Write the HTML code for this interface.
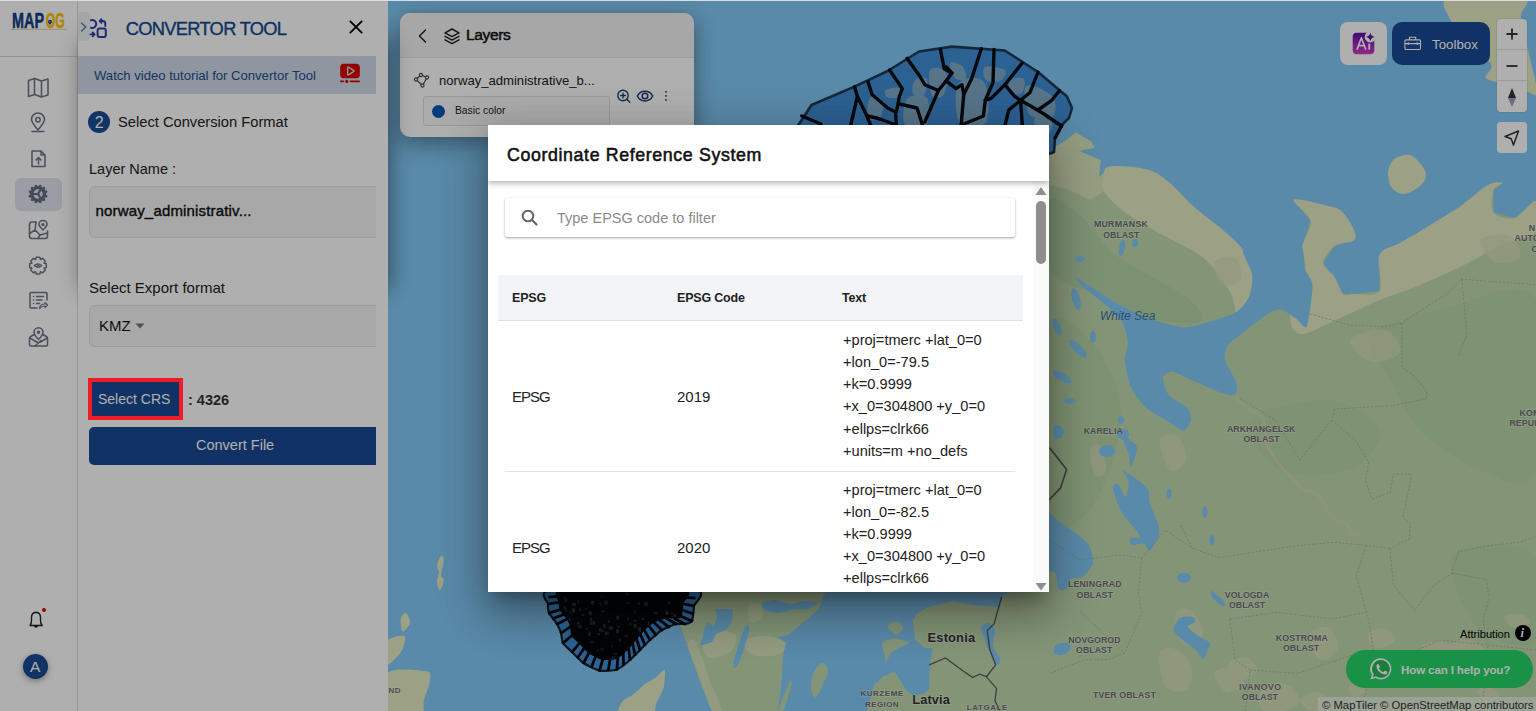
<!DOCTYPE html>
<html><head><meta charset="utf-8">
<style>
*{box-sizing:border-box;margin:0;padding:0}
html,body{width:1536px;height:711px;overflow:hidden;font-family:"Liberation Sans",sans-serif;background:#fff;position:relative}
.abs{position:absolute}
#topline{left:0;top:0;width:1536px;height:1px;background:#d9dde2;z-index:300}
#sidebar{left:0;top:0;width:78px;height:711px;background:#fff;border-right:1px solid #dcdcdc}
#sidebar .hr{position:absolute;left:0;top:56px;width:77px;height:1px;background:#d8d8d8}
#panel{left:78px;top:0;width:310px;height:711px;background:#fff}
#map{left:388px;top:0;width:1148px;height:711px;overflow:hidden}
#overlay{left:0;top:0;width:1536px;height:711px;background:rgba(0,0,0,0.315);z-index:100}
#modal{left:488px;top:125px;width:561px;height:467px;background:#fff;box-shadow:0 11px 15px -7px rgba(0,0,0,.3),0 24px 38px 3px rgba(0,0,0,.22),0 9px 46px 8px rgba(0,0,0,.16);overflow:hidden;z-index:200}
.t{position:absolute;white-space:nowrap;line-height:1}
</style></head><body>
<div id="topline" class="abs"></div>
<div id="map" class="abs"><svg class="abs" style="left:0;top:0" width="1148" height="711" viewBox="388 0 1148 711"><rect x="388" y="0" width="1148" height="711" fill="#84caf7"/>
<path d="M1450.0 -2.0 C1462.3 -5.2 1511.2 -5.2 1523.0 -2.0 C1534.8 1.2 1520.2 8.3 1521.0 17.0 C1521.8 25.7 1525.5 38.8 1528.0 50.0 C1530.5 61.2 1534.7 76.5 1536.0 84.0 C1537.3 91.5 1537.3 93.7 1536.0 95.0 C1534.7 96.3 1533.2 93.8 1528.0 92.0 C1522.8 90.2 1512.0 86.3 1505.0 84.0 C1498.0 81.7 1488.3 81.3 1486.0 78.0 C1483.7 74.7 1494.0 70.3 1491.0 64.0 C1488.0 57.7 1475.0 47.8 1468.0 40.0 C1461.0 32.2 1452.0 24.0 1449.0 17.0 C1446.0 10.0 1437.7 1.2 1450.0 -2.0 Z" fill="#e4e9c2" />
<path d="M1398.0 157.0 C1401.2 155.7 1406.3 154.0 1410.0 155.0 C1413.7 156.0 1417.3 159.7 1420.0 163.0 C1422.7 166.3 1426.0 171.2 1426.0 175.0 C1426.0 178.8 1423.7 182.8 1420.0 186.0 C1416.3 189.2 1408.7 193.7 1404.0 194.0 C1399.3 194.3 1394.7 191.2 1392.0 188.0 C1389.3 184.8 1388.2 179.2 1388.0 175.0 C1387.8 170.8 1389.3 166.0 1391.0 163.0 C1392.7 160.0 1394.8 158.3 1398.0 157.0 Z" fill="#e4e9c2" />
<path d="M1049.0 154.0 L1051.0 154.0 L1063.6 141.7 L1076.0 132.4 L1091.4 141.7 L1094.5 147.8 L1079.0 151.0 L1100.7 160.0 L1099.0 177.2 L1110.0 166.4 L1147.0 169.5 L1168.8 181.9 L1193.5 206.6 L1224.5 231.4 L1243.0 250.0 L1252.3 274.7 L1302.0 247.7 L1310.6 221.0 L1293.7 200.0 L1326.0 205.5 L1343.0 212.6 L1355.6 238.0 L1334.5 246.0 L1323.0 263.0 L1334.5 277.0 L1343.0 294.0 L1354.0 294.0 L1379.5 291.0 L1379.5 255.0 L1399.0 243.5 L1419.0 232.0 L1458.0 208.0 L1467.0 201.0 L1489.0 184.4 L1503.0 183.0 L1493.5 190.0 L1493.5 212.6 L1514.6 218.0 L1536.0 201.0 L1540.0 201.0 L1540.0 715.0 L1049.0 715.0 Z" fill="#c0daae" />
<path d="M1110.0 166.4 C1117.2 165.4 1137.2 166.9 1147.0 169.5 C1156.8 172.1 1161.0 175.7 1168.8 181.9 C1176.5 188.1 1184.2 198.3 1193.5 206.6 C1202.8 214.8 1216.2 224.2 1224.5 231.4 C1232.8 238.6 1238.4 242.8 1243.0 250.0 C1247.6 257.2 1251.3 267.0 1252.3 274.7 C1253.3 282.4 1251.6 289.5 1249.2 296.4 C1246.8 303.3 1241.2 316.7 1238.0 316.0 C1234.8 315.3 1235.3 301.3 1230.0 292.0 C1224.7 282.7 1214.3 268.0 1206.0 260.0 C1197.7 252.0 1189.3 249.3 1180.0 244.0 C1170.7 238.7 1159.7 233.7 1150.0 228.0 C1140.3 222.3 1129.7 216.2 1122.0 210.0 C1114.3 203.8 1107.0 196.7 1104.0 191.0 C1101.0 185.3 1102.8 179.8 1103.8 175.7 C1104.8 171.6 1102.8 167.4 1110.0 166.4 Z" fill="#e4e9c2" />
<path d="M1049.0 150.0 L1063.6 141.7 L1076.0 132.4 L1091.4 141.7 L1094.5 147.8 L1079.0 151.0 L1100.7 160.0 L1099.0 177.2 L1110.0 166.4 L1104.0 191.0 L1090.0 200.0 L1070.0 190.0 L1049.0 185.0 Z" fill="#e4e9c2" opacity="0.75"/>
<path d="M1293.7 200.0 C1296.3 197.4 1317.8 203.4 1326.0 205.5 C1334.2 207.6 1338.1 207.2 1343.0 212.6 C1347.9 218.0 1357.0 232.4 1355.6 238.0 C1354.2 243.6 1339.9 241.8 1334.5 246.0 C1329.1 250.2 1323.0 257.8 1323.0 263.0 C1323.0 268.2 1331.2 271.8 1334.5 277.0 C1337.8 282.2 1339.8 291.2 1343.0 294.0 C1346.2 296.8 1347.9 294.5 1354.0 294.0 C1360.1 293.5 1375.2 297.5 1379.5 291.0 C1383.8 284.5 1376.2 262.9 1379.5 255.0 C1382.8 247.1 1392.4 247.3 1399.0 243.5 C1405.6 239.7 1409.2 237.9 1419.0 232.0 C1428.8 226.1 1450.0 213.2 1458.0 208.0 C1466.0 202.8 1461.8 204.9 1467.0 201.0 C1472.2 197.1 1483.0 187.4 1489.0 184.4 C1495.0 181.4 1502.2 182.1 1503.0 183.0 C1503.8 183.9 1495.1 185.1 1493.5 190.0 C1491.9 194.9 1490.0 207.9 1493.5 212.6 C1497.0 217.3 1507.5 219.9 1514.6 218.0 C1521.7 216.1 1532.4 198.7 1536.0 201.0 C1539.6 203.3 1542.0 224.7 1536.0 232.0 C1530.0 239.3 1511.0 240.0 1500.0 245.0 C1489.0 250.0 1483.3 255.3 1470.0 262.0 C1456.7 268.7 1435.0 278.7 1420.0 285.0 C1405.0 291.3 1393.3 294.5 1380.0 300.0 C1366.7 305.5 1353.3 312.3 1340.0 318.0 C1326.7 323.7 1308.3 335.3 1300.0 334.0 C1291.7 332.7 1289.2 320.7 1290.0 310.0 C1290.8 299.3 1303.0 280.4 1305.0 270.0 C1307.0 259.6 1301.1 255.9 1302.0 247.7 C1302.9 239.5 1312.0 228.9 1310.6 221.0 C1309.2 213.1 1291.1 202.6 1293.7 200.0 Z" fill="#e4e9c2" />
<path d="M1049.0 200.0 C1054.2 192.5 1069.8 206.7 1080.0 215.0 C1090.2 223.3 1100.0 240.8 1110.0 250.0 C1120.0 259.2 1126.7 261.7 1140.0 270.0 C1153.3 278.3 1180.0 291.3 1190.0 300.0 C1200.0 308.7 1206.7 319.0 1200.0 322.0 C1193.3 325.0 1166.7 322.5 1150.0 318.0 C1133.3 313.5 1115.0 301.3 1100.0 295.0 C1085.0 288.7 1068.5 285.8 1060.0 280.0 C1051.5 274.2 1050.8 273.3 1049.0 260.0 C1047.2 246.7 1043.8 207.5 1049.0 200.0 Z" fill="#b0d2a2" opacity="0.7"/>
<path d="M1049.0 330.0 C1055.8 301.7 1078.2 328.3 1090.0 340.0 C1101.8 351.7 1116.7 378.3 1120.0 400.0 C1123.3 421.7 1116.7 450.0 1110.0 470.0 C1103.3 490.0 1090.2 513.3 1080.0 520.0 C1069.8 526.7 1054.2 541.7 1049.0 510.0 C1043.8 478.3 1042.2 358.3 1049.0 330.0 Z" fill="#b0d2a2" opacity="0.55"/>
<path d="M1370.0 335.0 C1378.3 323.3 1412.3 315.8 1440.0 310.0 C1467.7 304.2 1520.0 273.3 1536.0 300.0 C1552.0 326.7 1545.3 441.7 1536.0 470.0 C1526.7 498.3 1499.3 476.7 1480.0 470.0 C1460.7 463.3 1435.0 445.0 1420.0 430.0 C1405.0 415.0 1398.3 395.8 1390.0 380.0 C1381.7 364.2 1361.7 346.7 1370.0 335.0 Z" fill="#b0d2a2" opacity="0.45"/>
<path d="M1250.0 420.0 C1258.3 408.3 1308.3 398.3 1330.0 400.0 C1351.7 401.7 1376.7 418.3 1380.0 430.0 C1383.3 441.7 1366.7 463.3 1350.0 470.0 C1333.3 476.7 1296.7 478.3 1280.0 470.0 C1263.3 461.7 1241.7 431.7 1250.0 420.0 Z" fill="#b0d2a2" opacity="0.35"/>
<path d="M1450.0 560.0 C1453.3 545.8 1485.7 545.0 1500.0 545.0 C1514.3 545.0 1530.0 544.2 1536.0 560.0 C1542.0 575.8 1545.3 628.3 1536.0 640.0 C1526.7 651.7 1494.3 643.3 1480.0 630.0 C1465.7 616.7 1446.7 574.2 1450.0 560.0 Z" fill="#b0d2a2" opacity="0.4"/>
<path d="M1230.0 662.0 C1232.7 659.0 1243.5 656.7 1248.0 658.0 C1252.5 659.3 1257.7 666.3 1257.0 670.0 C1256.3 673.7 1248.2 679.0 1244.0 680.0 C1239.8 681.0 1234.3 679.0 1232.0 676.0 C1229.7 673.0 1227.3 665.0 1230.0 662.0 Z" fill="#d6dcb8" opacity="0.75"/>
<path d="M1176.0 614.0 C1177.7 609.0 1185.5 607.3 1190.0 610.0 C1194.5 612.7 1202.0 624.0 1203.0 630.0 C1204.0 636.0 1199.8 644.3 1196.0 646.0 C1192.2 647.7 1183.3 645.3 1180.0 640.0 C1176.7 634.7 1174.3 619.0 1176.0 614.0 Z" fill="#d6dcb8" opacity="0.75"/>
<path d="M1311.0 632.0 C1313.8 628.0 1325.5 625.3 1330.0 628.0 C1334.5 630.7 1338.8 642.7 1338.0 648.0 C1337.2 653.3 1329.2 659.3 1325.0 660.0 C1320.8 660.7 1315.3 656.7 1313.0 652.0 C1310.7 647.3 1308.2 636.0 1311.0 632.0 Z" fill="#d6dcb8" opacity="0.75"/>
<path d="M1396.0 653.0 C1397.3 650.7 1405.2 648.8 1408.0 650.0 C1410.8 651.2 1414.3 657.7 1413.0 660.0 C1411.7 662.3 1402.8 665.2 1400.0 664.0 C1397.2 662.8 1394.7 655.3 1396.0 653.0 Z" fill="#d6dcb8" opacity="0.75"/>
<path d="M1160.0 652.0 C1162.2 646.0 1172.7 647.3 1178.0 650.0 C1183.3 652.7 1190.7 661.3 1192.0 668.0 C1193.3 674.7 1190.5 687.0 1186.0 690.0 C1181.5 693.0 1169.3 692.3 1165.0 686.0 C1160.7 679.7 1157.8 658.0 1160.0 652.0 Z" fill="#d6dcb8" opacity="0.75"/>
<path d="M1262.0 690.0 C1265.8 685.5 1278.7 682.3 1285.0 684.0 C1291.3 685.7 1300.0 695.5 1300.0 700.0 C1300.0 704.5 1291.3 709.2 1285.0 711.0 C1278.7 712.8 1265.8 714.5 1262.0 711.0 C1258.2 707.5 1258.2 694.5 1262.0 690.0 Z" fill="#d6dcb8" opacity="0.75"/>
<path d="M1440.0 650.0 C1444.2 644.7 1461.7 638.3 1470.0 640.0 C1478.3 641.7 1490.0 653.3 1490.0 660.0 C1490.0 666.7 1477.5 678.0 1470.0 680.0 C1462.5 682.0 1450.0 677.0 1445.0 672.0 C1440.0 667.0 1435.8 655.3 1440.0 650.0 Z" fill="#d6dcb8" opacity="0.75"/>
<path d="M1214.0 262.0 C1216.3 257.5 1231.7 255.0 1236.0 258.0 C1240.3 261.0 1242.3 275.5 1240.0 280.0 C1237.7 284.5 1226.3 288.0 1222.0 285.0 C1217.7 282.0 1211.7 266.5 1214.0 262.0 Z" fill="#d6dcb8" opacity="0.75"/>
<path d="M1350.0 340.0 C1352.2 334.7 1376.7 328.0 1385.0 330.0 C1393.3 332.0 1402.2 346.7 1400.0 352.0 C1397.8 357.3 1380.3 364.0 1372.0 362.0 C1363.7 360.0 1347.8 345.3 1350.0 340.0 Z" fill="#d6dcb8" opacity="0.75"/>
<path d="M1480.0 240.0 C1482.5 235.7 1503.3 233.0 1510.0 236.0 C1516.7 239.0 1522.5 253.7 1520.0 258.0 C1517.5 262.3 1501.7 265.0 1495.0 262.0 C1488.3 259.0 1477.5 244.3 1480.0 240.0 Z" fill="#d6dcb8" opacity="0.75"/>
<path d="M1090.0 450.0 C1090.8 445.2 1097.3 442.7 1100.0 446.0 C1102.7 449.3 1106.8 465.2 1106.0 470.0 C1105.2 474.8 1097.7 478.3 1095.0 475.0 C1092.3 471.7 1089.2 454.8 1090.0 450.0 Z" fill="#d6dcb8" opacity="0.75"/>
<path d="M1369.0 632.0 C1371.5 629.5 1380.7 627.7 1385.0 629.0 C1389.3 630.3 1395.8 636.8 1395.0 640.0 C1394.2 643.2 1384.2 647.3 1380.0 648.0 C1375.8 648.7 1371.8 646.7 1370.0 644.0 C1368.2 641.3 1366.5 634.5 1369.0 632.0 Z" fill="#d6dcb8" opacity="0.75"/>
<path d="M1423.0 645.0 C1425.5 642.8 1434.8 640.5 1440.0 641.0 C1445.2 641.5 1454.0 645.5 1454.0 648.0 C1454.0 650.5 1444.8 655.0 1440.0 656.0 C1435.2 657.0 1427.8 655.8 1425.0 654.0 C1422.2 652.2 1420.5 647.2 1423.0 645.0 Z" fill="#d6dcb8" opacity="0.75"/>
<path d="M1477.0 690.0 C1477.7 687.5 1486.2 686.0 1490.0 687.0 C1493.8 688.0 1500.7 693.5 1500.0 696.0 C1499.3 698.5 1489.8 703.0 1486.0 702.0 C1482.2 701.0 1476.3 692.5 1477.0 690.0 Z" fill="#d6dcb8" opacity="0.75"/>
<path d="M1350.0 684.0 C1351.7 681.7 1359.3 680.7 1362.0 682.0 C1364.7 683.3 1367.7 689.7 1366.0 692.0 C1364.3 694.3 1354.7 697.3 1352.0 696.0 C1349.3 694.7 1348.3 686.3 1350.0 684.0 Z" fill="#d6dcb8" opacity="0.75"/>
<path d="M1504.0 617.0 C1504.8 614.7 1515.7 613.2 1520.0 614.0 C1524.3 614.8 1530.8 619.7 1530.0 622.0 C1529.2 624.3 1519.3 628.8 1515.0 628.0 C1510.7 627.2 1503.2 619.3 1504.0 617.0 Z" fill="#d6dcb8" opacity="0.75"/>
<path d="M1300.0 700.0 C1301.0 696.8 1313.0 691.2 1318.0 692.0 C1323.0 692.8 1331.0 701.8 1330.0 705.0 C1329.0 708.2 1317.0 711.8 1312.0 711.0 C1307.0 710.2 1299.0 703.2 1300.0 700.0 Z" fill="#d6dcb8" opacity="0.75"/>
<path d="M1215.0 672.0 C1216.7 668.0 1231.2 666.0 1236.0 668.0 C1240.8 670.0 1245.7 680.0 1244.0 684.0 C1242.3 688.0 1230.8 694.0 1226.0 692.0 C1221.2 690.0 1213.3 676.0 1215.0 672.0 Z" fill="#d6dcb8" opacity="0.75"/>
<path d="M1160.0 440.0 C1161.3 434.3 1173.7 432.7 1178.0 436.0 C1182.3 439.3 1187.3 454.3 1186.0 460.0 C1184.7 465.7 1174.3 473.3 1170.0 470.0 C1165.7 466.7 1158.7 445.7 1160.0 440.0 Z" fill="#d6dcb8" opacity="0.75"/>
<path d="M1266.6 446.4 L1282 468 L1303.7 489.7 L1316 492.8 L1325.4 505 L1331.6 517.5 L1347 523.7 L1353 536 L1362.5 533" fill="none" stroke="#d8d6b0" stroke-width="2.2" opacity="0.75" stroke-linejoin="round"/>
<path d="M1237 400 L1250 410 L1263.5 418 L1266.6 446.4" fill="none" stroke="#d8d6b0" stroke-width="2.5" opacity="0.6"/>
<path d="M1243.0 250.0 C1242.1 254.3 1251.6 269.3 1252.3 274.7 C1253.0 280.1 1251.0 292.1 1249.2 296.4 C1247.4 300.7 1241.1 308.9 1236.8 311.8 C1232.5 314.7 1218.1 319.2 1212.0 321.0 C1205.9 322.8 1191.8 327.7 1184.2 327.3 C1176.6 326.9 1155.0 320.9 1147.0 318.0 C1139.0 315.1 1122.5 306.1 1116.0 302.5 C1109.5 298.9 1096.1 289.9 1091.4 287.0 C1086.7 284.1 1076.9 277.7 1076.0 277.8 C1075.1 277.9 1080.1 284.6 1083.4 287.6 C1086.7 290.6 1099.5 299.8 1104.0 303.8 C1108.5 307.8 1119.0 317.1 1121.8 321.6 C1124.6 326.1 1127.4 337.7 1127.7 342.2 C1128.0 346.7 1124.4 354.8 1124.7 360.0 C1125.0 365.2 1128.2 381.0 1130.6 386.5 C1133.0 392.0 1140.9 403.1 1145.4 407.2 C1149.9 411.3 1164.5 419.2 1169.0 422.0 C1173.5 424.8 1181.2 431.2 1183.8 430.8 C1186.4 430.4 1190.9 421.8 1191.2 419.0 C1191.5 416.2 1189.4 410.0 1186.8 407.2 C1184.2 404.4 1171.8 398.8 1169.0 395.4 C1166.2 392.0 1162.7 380.5 1163.0 377.7 C1163.3 374.9 1168.5 371.5 1172.0 371.8 C1175.5 372.1 1187.5 378.4 1192.7 380.6 C1197.9 382.8 1211.5 389.3 1216.3 391.0 C1221.1 392.7 1231.6 396.3 1234.0 395.4 C1236.4 394.5 1238.0 387.7 1237.0 383.6 C1236.0 379.5 1226.0 364.5 1225.0 360.0 C1224.0 355.5 1225.6 348.7 1228.0 345.2 C1230.4 341.7 1241.0 334.2 1245.8 330.4 C1250.6 326.6 1265.4 315.1 1269.5 312.7 C1273.6 310.3 1278.2 309.0 1281.3 309.7 C1284.4 310.4 1293.1 316.5 1296.0 318.6 C1298.9 320.7 1304.7 329.2 1306.4 327.5 C1308.1 325.8 1310.1 309.0 1310.8 303.8 C1311.5 298.6 1313.0 287.1 1312.3 283.0 C1311.6 278.9 1306.1 272.5 1304.9 268.4 C1303.7 264.3 1304.3 251.6 1302.0 247.7 C1299.7 243.8 1289.9 236.1 1285.0 235.0 C1280.1 233.9 1264.9 236.2 1260.0 238.0 C1255.1 239.8 1243.9 245.7 1243.0 250.0 Z" fill="#84caf7" />
<path d="M1046.0 516.0 C1048.0 508.5 1054.6 519.0 1058.3 521.0 C1062.0 523.0 1063.3 524.5 1068.0 528.0 C1072.7 531.5 1082.2 536.8 1086.4 542.0 C1090.6 547.2 1092.7 554.8 1093.4 559.0 C1094.1 563.2 1092.5 564.5 1090.6 567.5 C1088.7 570.5 1085.3 575.4 1082.0 577.3 C1078.7 579.2 1073.5 576.8 1071.0 578.7 C1068.5 580.6 1068.8 587.0 1066.7 588.6 C1064.6 590.2 1060.2 591.2 1058.3 588.6 C1056.4 586.0 1057.5 576.8 1055.5 573.0 C1053.5 569.2 1047.6 575.5 1046.0 566.0 C1044.4 556.5 1044.0 523.5 1046.0 516.0 Z" fill="#84caf7" />
<path d="M1124.0 471.0 C1127.1 472.0 1142.7 482.6 1147.0 488.0 C1151.3 493.4 1147.9 496.3 1150.0 503.5 C1152.1 510.7 1159.4 523.6 1159.4 531.4 C1159.4 539.1 1152.6 548.0 1150.0 550.0 C1147.4 552.0 1147.0 544.5 1144.0 543.7 C1141.0 542.9 1134.3 546.0 1132.0 545.0 C1129.7 544.0 1128.7 539.5 1130.0 538.0 C1131.3 536.5 1141.3 540.2 1140.0 536.0 C1138.7 531.8 1126.5 520.8 1122.0 512.8 C1117.5 504.8 1113.5 492.6 1113.0 488.0 C1112.5 483.4 1116.9 483.5 1119.0 485.0 C1121.1 486.5 1123.8 497.5 1125.4 497.0 C1127.0 496.5 1128.7 486.3 1128.5 482.0 C1128.3 477.7 1120.9 470.0 1124.0 471.0 Z" fill="#84caf7" />
<path d="M1120.0 432.0 C1120.3 430.0 1127.2 437.3 1130.0 440.0 C1132.8 442.7 1136.8 443.7 1137.0 448.0 C1137.2 452.3 1132.5 465.3 1131.0 466.0 C1129.5 466.7 1129.8 457.7 1128.0 452.0 C1126.2 446.3 1119.7 434.0 1120.0 432.0 Z" fill="#84caf7" />
<path d="M1180.0 618.0 C1183.0 616.2 1189.5 616.3 1192.0 617.0 C1194.5 617.7 1195.7 620.3 1195.0 622.0 C1194.3 623.7 1187.2 624.5 1188.0 627.0 C1188.8 629.5 1196.3 634.3 1200.0 637.0 C1203.7 639.7 1208.8 640.5 1210.0 643.0 C1211.2 645.5 1208.2 649.3 1207.0 652.0 C1205.8 654.7 1204.8 659.3 1203.0 659.0 C1201.2 658.7 1199.0 652.8 1196.0 650.0 C1193.0 647.2 1188.5 644.8 1185.0 642.0 C1181.5 639.2 1176.8 635.3 1175.0 633.0 C1173.2 630.7 1173.2 630.5 1174.0 628.0 C1174.8 625.5 1177.0 619.8 1180.0 618.0 Z" fill="#84caf7" />
<path d="M1056.0 645.0 C1058.3 643.3 1065.7 642.2 1068.0 643.0 C1070.3 643.8 1071.0 648.0 1070.0 650.0 C1069.0 652.0 1064.7 654.5 1062.0 655.0 C1059.3 655.5 1055.0 654.7 1054.0 653.0 C1053.0 651.3 1053.7 646.7 1056.0 645.0 Z" fill="#84caf7" />
<path d="M1211.0 591.0 C1211.7 590.5 1213.7 592.0 1216.0 594.0 C1218.3 596.0 1224.0 601.0 1225.0 603.0 C1226.0 605.0 1224.2 607.0 1222.0 606.0 C1219.8 605.0 1213.8 599.5 1212.0 597.0 C1210.2 594.5 1210.3 591.5 1211.0 591.0 Z" fill="#84caf7" />
<ellipse cx="1107" cy="451" rx="8" ry="6" transform="rotate(0 1107 451)" fill="#84caf7"/>
<ellipse cx="1184" cy="578" rx="7" ry="5" transform="rotate(0 1184 578)" fill="#84caf7"/>
<ellipse cx="1169" cy="494" rx="2.5" ry="5" transform="rotate(0 1169 494)" fill="#84caf7"/>
<ellipse cx="1205" cy="512" rx="2.5" ry="6" transform="rotate(0 1205 512)" fill="#84caf7"/>
<ellipse cx="1212" cy="540" rx="2.5" ry="5" transform="rotate(0 1212 540)" fill="#84caf7"/>
<ellipse cx="1121" cy="420" rx="3" ry="4" transform="rotate(0 1121 420)" fill="#84caf7"/>
<ellipse cx="1057" cy="327" rx="3.5" ry="9" transform="rotate(-20 1057 327)" fill="#84caf7"/>
<ellipse cx="1078" cy="349" rx="4" ry="12" transform="rotate(-45 1078 349)" fill="#84caf7"/>
<ellipse cx="1093" cy="337" rx="3" ry="6" transform="rotate(0 1093 337)" fill="#84caf7"/>
<ellipse cx="1062" cy="377" rx="4" ry="11" transform="rotate(-60 1062 377)" fill="#84caf7"/>
<ellipse cx="1070" cy="401" rx="6" ry="3" transform="rotate(0 1070 401)" fill="#84caf7"/>
<ellipse cx="1057" cy="432" rx="4" ry="7" transform="rotate(0 1057 432)" fill="#84caf7"/>
<ellipse cx="1123" cy="434" rx="6" ry="5" transform="rotate(0 1123 434)" fill="#84caf7"/>
<ellipse cx="1080" cy="259" rx="5" ry="3" transform="rotate(0 1080 259)" fill="#84caf7"/>
<ellipse cx="1122" cy="248" rx="3" ry="8" transform="rotate(10 1122 248)" fill="#84caf7"/>
<ellipse cx="1135" cy="243" rx="3" ry="4" transform="rotate(0 1135 243)" fill="#84caf7"/>
<ellipse cx="1076" cy="299" rx="4" ry="11" transform="rotate(-15 1076 299)" fill="#84caf7"/>
<ellipse cx="1060" cy="432" rx="4" ry="6" transform="rotate(0 1060 432)" fill="#84caf7"/>
<path d="M1049.6 447.8 L1066.6 469.5 L1060.5 488 L1049 500" fill="none" stroke="#555" stroke-width="1.5"/>
<path d="M1310.6 314 L1349 325 L1384.5 326.7 L1402 323 L1447.7 293 L1461.8 279 L1483 281 L1536 284.5" fill="none" stroke="#9aa191" stroke-width="0.8" stroke-dasharray="2.2 1.6" opacity="0.8"/>
<path d="M1402 323 L1402 367 L1416 377.6 L1426.6 391.7 L1426.6 398.7 L1391.5 405.7 L1335 409 L1331.7 419.8 L1356 441 L1368.7 461.9 L1365.6 480.4 L1371.8 499 L1390 492.8 L1393.4 474 L1412 474 L1402.7 517.5 L1410.4 523.7 L1409 539.2 L1390 548.5 L1365.6 545.4 L1334.7 542.3 L1300.6 545.4 L1257.3 551.6 L1220 557.7 L1192.4 548.5 L1180 523.7" fill="none" stroke="#9aa191" stroke-width="0.8" stroke-dasharray="2.2 1.6" opacity="0.8"/>
<path d="M1461.8 279 L1467 335.4 L1458 356.5" fill="none" stroke="#9aa191" stroke-width="0.8" stroke-dasharray="2.2 1.6" opacity="0.8"/>
<path d="M1365.6 545.4 L1356.3 576.3 L1362.5 598 L1368.7 620 L1375 660 L1360 711" fill="none" stroke="#9aa191" stroke-width="0.8" stroke-dasharray="2.2 1.6" opacity="0.8"/>
<path d="M1390 548.5 L1393.4 585.6 L1415 610.3 L1433.6 585.6 L1452 573.2 L1458.4 551.6 L1489.3 545.4 L1520.2 542.3 L1536 536" fill="none" stroke="#9aa191" stroke-width="0.8" stroke-dasharray="2.2 1.6" opacity="0.8"/>
<path d="M1452 573.2 L1486 579.4 L1489.3 598 L1483 620 L1490 660 L1480 711" fill="none" stroke="#9aa191" stroke-width="0.8" stroke-dasharray="2.2 1.6" opacity="0.8"/>
<path d="M1141.7 558 L1138.3 592 L1141.7 612.4 L1124.7 653 L1107.8 659.8 L1084 659.8 L1050 673.4" fill="none" stroke="#9aa191" stroke-width="0.8" stroke-dasharray="2.2 1.6" opacity="0.8"/>
<path d="M1229.8 619 L1277.3 612.4 L1331.5 619 L1365.4 612.4" fill="none" stroke="#9aa191" stroke-width="0.8" stroke-dasharray="2.2 1.6" opacity="0.8"/>
<path d="M1250 670 L1297.6 673.4 L1358.6 653 L1396 659.8 L1440 640 L1536 650" fill="none" stroke="#9aa191" stroke-width="0.8" stroke-dasharray="2.2 1.6" opacity="0.8"/>
<path d="M1229.8 619 L1235 660 L1250 670 L1245 711" fill="none" stroke="#9aa191" stroke-width="0.8" stroke-dasharray="2.2 1.6" opacity="0.8"/>
<path d="M1080 611 L1100 630 L1124.7 653" fill="none" stroke="#9aa191" stroke-width="0.8" stroke-dasharray="2.2 1.6" opacity="0.8"/>
<path d="M1049 540 L1080 560 L1120 555 L1141.7 558 L1165 530 L1192.4 548.5" fill="none" stroke="#9aa191" stroke-width="0.8" stroke-dasharray="2.2 1.6" opacity="0.8"/>
<path d="M1240 398 L1275 420 L1300 460 L1331.7 419.8" fill="none" stroke="#9aa191" stroke-width="0.8" stroke-dasharray="2.2 1.6" opacity="0.8"/>
<path d="M437.0 566.0 C437.3 563.3 439.8 557.0 441.0 556.0 C442.2 555.0 444.0 556.8 444.0 560.0 C444.0 563.2 441.0 571.7 441.0 575.0 C441.0 578.3 444.2 577.5 444.0 580.0 C443.8 582.5 441.2 589.7 440.0 590.0 C438.8 590.3 437.2 585.0 437.0 582.0 C436.8 579.0 439.0 574.7 439.0 572.0 C439.0 569.3 436.7 568.7 437.0 566.0 Z" fill="#e4e9c2" />
<path d="M401.0 618.0 C401.7 615.0 404.5 612.3 406.0 613.0 C407.5 613.7 409.8 619.5 410.0 622.0 C410.2 624.5 408.3 626.5 407.0 628.0 C405.7 629.5 403.0 632.7 402.0 631.0 C401.0 629.3 400.3 621.0 401.0 618.0 Z" fill="#e4e9c2" />
<path d="M386.0 642.0 C389.0 637.3 401.2 635.0 404.0 636.0 C406.8 637.0 404.3 644.3 403.0 648.0 C401.7 651.7 398.8 655.3 396.0 658.0 C393.2 660.7 387.7 666.7 386.0 664.0 C384.3 661.3 383.0 646.7 386.0 642.0 Z" fill="#e4e9c2" />
<path d="M386.0 674.0 C392.5 666.7 417.7 670.0 425.0 671.0 C432.3 672.0 430.2 675.2 430.0 680.0 C429.8 684.8 425.7 694.2 424.0 700.0 C422.3 705.8 426.3 712.5 420.0 715.0 C413.7 717.5 391.7 721.8 386.0 715.0 C380.3 708.2 379.5 681.3 386.0 674.0 Z" fill="#e4e9c2" />
<path d="M664.6 670.0 C665.6 670.9 664.5 683.0 664.0 686.0 C663.5 689.0 660.9 693.9 660.0 696.0 C659.1 698.1 656.9 701.8 656.0 704.0 C655.1 706.2 656.3 713.7 652.0 715.0 C647.7 716.3 622.5 716.5 619.0 715.0 C615.5 713.5 620.2 704.5 622.0 702.0 C623.8 699.5 631.3 696.1 634.0 694.0 C636.7 691.9 642.5 685.9 645.0 684.0 C647.5 682.1 652.7 679.6 655.0 678.0 C657.3 676.4 663.6 669.1 664.6 670.0 Z" fill="#e4e9c2" />
<path d="M690.0 590.0 L826.0 590.0 L818.5 609.7 L803.7 622.0 L789.0 634.4 L776.0 638.0 L786.0 642.0 L783.0 655.0 L782.0 675.0 L780.0 697.0 L777.0 715.0 L714.0 715.0 L703.0 690.0 L694.0 665.0 L687.0 645.0 L682.0 630.0 L679.0 623.0 Z" fill="#c0daae" />
<path d="M688.0 645.0 C688.2 649.2 692.3 657.5 695.0 665.0 C697.7 672.5 701.2 682.3 704.0 690.0 C706.8 697.7 709.0 707.5 712.0 711.0 C715.0 714.5 722.0 715.2 722.0 711.0 C722.0 706.8 715.2 694.5 712.0 686.0 C708.8 677.5 706.0 667.7 703.0 660.0 C700.0 652.3 696.5 642.5 694.0 640.0 C691.5 637.5 687.8 640.8 688.0 645.0 Z" fill="#e4e9c2" opacity="0.55"/>
<path d="M702.0 634.0 C704.5 630.7 712.3 629.7 718.0 630.0 C723.7 630.3 734.0 632.3 736.0 636.0 C738.0 639.7 734.0 648.3 730.0 652.0 C726.0 655.7 716.5 658.3 712.0 658.0 C707.5 657.7 704.7 654.0 703.0 650.0 C701.3 646.0 699.5 637.3 702.0 634.0 Z" fill="#e4e9c2" opacity="0.6"/>
<path d="M746.0 640.0 C749.0 637.3 759.5 635.7 766.0 636.0 C772.5 636.3 782.7 639.0 785.0 642.0 C787.3 645.0 784.2 651.7 780.0 654.0 C775.8 656.3 765.3 656.3 760.0 656.0 C754.7 655.7 750.3 654.7 748.0 652.0 C745.7 649.3 743.0 642.7 746.0 640.0 Z" fill="#e4e9c2" opacity="0.6"/>
<path d="M749.0 606.0 C750.7 603.0 757.8 602.0 760.0 604.0 C762.2 606.0 763.7 615.0 762.0 618.0 C760.3 621.0 752.2 624.0 750.0 622.0 C747.8 620.0 747.3 609.0 749.0 606.0 Z" fill="#e4e9c2" opacity="0.55"/>
<path d="M715.0 609.0 L733.0 609.0 L732.0 622.0 L726.0 630.0 L716.0 634.0 L712.0 642.0 L700.0 646.0 L704.0 630.0 L708.0 622.0 L714.0 626.0 L717.0 618.0 Z" fill="#84caf7" />
<path d="M745.0 627.0 C747.5 622.2 749.8 625.5 749.0 631.0 C748.2 636.5 742.3 653.8 740.0 660.0 C737.7 666.2 736.0 668.0 735.0 668.0 C734.0 668.0 732.3 666.8 734.0 660.0 C735.7 653.2 742.5 631.8 745.0 627.0 Z" fill="#84caf7" />
<path d="M762.0 603.0 C763.0 602.0 772.2 599.9 775.0 600.0 C777.8 600.1 787.0 603.9 790.0 604.0 C793.0 604.1 802.2 601.1 805.0 601.0 C807.8 600.9 817.7 602.2 818.0 603.0 C818.3 603.8 810.6 608.3 808.0 609.0 C805.4 609.7 795.0 609.6 792.0 610.0 C789.0 610.4 780.7 613.0 778.0 613.0 C775.3 613.0 766.6 611.0 765.0 610.0 C763.4 609.0 761.0 604.0 762.0 603.0 Z" fill="#84caf7" />
<path d="M822.0 663.0 C824.5 662.3 827.8 666.5 828.0 670.0 C828.2 673.5 825.0 679.5 823.0 684.0 C821.0 688.5 818.0 696.2 816.0 697.0 C814.0 697.8 811.5 692.8 811.0 689.0 C810.5 685.2 811.2 678.3 813.0 674.0 C814.8 669.7 819.5 663.7 822.0 663.0 Z" fill="#c0daae" />
<path d="M789.0 683.0 C791.2 678.7 792.0 681.3 791.0 686.0 C790.0 690.7 785.2 706.7 783.0 711.0 C780.8 715.3 777.0 716.7 778.0 712.0 C779.0 707.3 786.8 687.3 789.0 683.0 Z" fill="#c0daae" />
<path d="M913.0 620.6 L916.6 613.8 L928.5 607.0 L952.3 601.0 L976.0 605.3 L1000.0 607.0 L1001.7 596.8 L1010.0 592.0 L1049.0 590.0 L1049.0 715.0 L866.0 715.0 L874.0 685.3 L882.5 676.8 L894.5 671.7 L897.9 676.8 L906.4 690.4 L913.2 695.5 L923.4 693.8 L929.3 688.7 L929.3 678.5 L930.2 663.2 L932.7 647.9 L925.0 647.9 L914.9 639.4 Z" fill="#c0daae" />
<path d="M882.5 642.8 C884.2 640.4 890.8 638.8 894.5 638.5 C898.2 638.2 902.3 640.3 904.7 641.0 C907.1 641.7 909.9 641.6 909.0 642.8 C908.1 643.9 902.6 646.2 899.6 647.9 C896.6 649.6 893.3 650.7 891.0 653.0 C888.7 655.3 887.1 661.5 886.0 661.5 C884.9 661.5 884.8 656.1 884.2 653.0 C883.6 649.9 880.8 645.2 882.5 642.8 Z" fill="#c0daae" />
<path d="M887.6 626.6 C887.6 624.5 893.6 621.4 896.2 621.5 C898.8 621.6 903.0 625.3 903.0 627.4 C903.0 629.5 898.8 634.3 896.2 634.2 C893.6 634.1 887.6 628.7 887.6 626.6 Z" fill="#c0daae" />
<path d="M981.3 627.4 C982.1 624.7 987.5 622.6 989.8 623.2 C992.1 623.8 994.3 627.0 994.9 630.8 C995.5 634.6 992.4 641.7 993.2 646.2 C994.1 650.7 999.4 654.9 1000.0 658.0 C1000.6 661.1 998.3 665.7 996.6 664.9 C994.9 664.1 991.8 657.2 989.8 653.0 C987.8 648.8 986.1 643.7 984.7 639.4 C983.3 635.1 980.4 630.1 981.3 627.4 Z" fill="#84caf7" />
<path d="M1001.7 596.8 L994 624 L987.2 630.8 L989.8 649.6 L995.7 664.9 L986.4 676.8 L996.6 688.7 L994.9 700.6 L1000 711" fill="none" stroke="#5a5a5a" stroke-width="1.3"/>
<path d="M929.3 664.9 L945.5 658 L964.2 671.7 L972.7 677.6 L979.5 674.2 L987.2 676.8" fill="none" stroke="#5a5a5a" stroke-width="1.3"/>
<path d="M797.8 126.0 L811.5 105.0 L854.5 86.6 L887.7 71.0 L919.0 51.5 L952.0 46.6 L1004.8 50.5 L1038.0 72.0 L1067.0 96.4 L1072.0 108.0 L1069.0 118.0 L1063.0 123.8 L1055.0 138.0 L1054.0 152.0 L1049.0 154.0 L797.0 154.0 Z" fill="#408ed6"/>
<path d="M950.0 63.0 C951.2 61.0 959.3 63.3 962.0 66.0 C964.7 68.7 967.2 77.0 966.0 79.0 C964.8 81.0 957.7 80.7 955.0 78.0 C952.3 75.3 948.8 65.0 950.0 63.0 Z" fill="#86adc6" opacity="0.9"/>
<path d="M930.0 70.0 C932.3 66.0 943.7 68.0 946.0 72.0 C948.3 76.0 946.3 90.0 944.0 94.0 C941.7 98.0 934.3 100.0 932.0 96.0 C929.7 92.0 927.7 74.0 930.0 70.0 Z" fill="#86adc6" opacity="0.9"/>
<path d="M915.0 80.0 C917.3 77.5 925.5 76.5 927.0 79.0 C928.5 81.5 926.3 92.5 924.0 95.0 C921.7 97.5 914.5 96.5 913.0 94.0 C911.5 91.5 912.7 82.5 915.0 80.0 Z" fill="#86adc6" opacity="0.9"/>
<path d="M886.0 90.0 C888.0 88.5 896.8 86.8 899.0 88.0 C901.2 89.2 901.0 95.5 899.0 97.0 C897.0 98.5 889.2 98.2 887.0 97.0 C884.8 95.8 884.0 91.5 886.0 90.0 Z" fill="#86adc6" opacity="0.9"/>
<path d="M985.0 67.0 C988.2 65.3 1002.5 67.7 1005.0 70.0 C1007.5 72.3 1003.2 79.3 1000.0 81.0 C996.8 82.7 988.5 82.3 986.0 80.0 C983.5 77.7 981.8 68.7 985.0 67.0 Z" fill="#86adc6" opacity="0.9"/>
<path d="M1011.0 80.0 C1013.3 77.8 1022.2 76.8 1024.0 79.0 C1025.8 81.2 1024.3 90.8 1022.0 93.0 C1019.7 95.2 1011.8 94.2 1010.0 92.0 C1008.2 89.8 1008.7 82.2 1011.0 80.0 Z" fill="#86adc6" opacity="0.9"/>
<path d="M1026.0 86.0 C1029.7 82.8 1047.5 91.0 1052.0 96.0 C1056.5 101.0 1056.7 112.8 1053.0 116.0 C1049.3 119.2 1034.5 120.0 1030.0 115.0 C1025.5 110.0 1022.3 89.2 1026.0 86.0 Z" fill="#86adc6" opacity="0.9"/>
<path d="M958.0 84.0 C962.0 77.0 979.3 75.7 984.0 82.0 C988.7 88.3 990.0 115.0 986.0 122.0 C982.0 129.0 964.7 130.3 960.0 124.0 C955.3 117.7 954.0 91.0 958.0 84.0 Z" fill="#86adc6" opacity="0.9"/>
<path d="M907.0 99.0 C910.7 94.5 923.8 93.7 927.0 98.0 C930.2 102.3 929.7 120.5 926.0 125.0 C922.3 129.5 908.2 129.3 905.0 125.0 C901.8 120.7 903.3 103.5 907.0 99.0 Z" fill="#86adc6" opacity="0.9"/>
<path d="M870.0 98.0 C872.3 95.3 880.3 98.7 882.0 102.0 C883.7 105.3 882.3 115.3 880.0 118.0 C877.7 120.7 869.7 121.3 868.0 118.0 C866.3 114.7 867.7 100.7 870.0 98.0 Z" fill="#86adc6" opacity="0.9"/>
<path d="M1035.0 118.0 C1037.3 115.8 1049.8 119.2 1052.0 122.0 C1054.2 124.8 1050.3 132.8 1048.0 135.0 C1045.7 137.2 1040.2 137.8 1038.0 135.0 C1035.8 132.2 1032.7 120.2 1035.0 118.0 Z" fill="#86adc6" opacity="0.9"/>
<path d="M797.8 126 L811.5 105 L854.5 86.6 L887.7 71 L919 51.5 L952 46.6 L1004.8 50.5 L1038 72 L1067 96.4 L1072 108 L1069 118 L1063 123.75 L1055 138 L1054 152 L1049 154" fill="none" stroke="#1f3a52" stroke-width="2.6" stroke-linejoin="round"/>
<path d="M854.5 86.6 L857.4 96.4 L850.5 126.0" fill="none" stroke="#0a0e12" stroke-width="3.4" stroke-linejoin="round" stroke-linecap="round"/>
<path d="M857.4 96.4 L866.0 114.0 L871.0 126.0" fill="none" stroke="#0a0e12" stroke-width="3.4" stroke-linejoin="round" stroke-linecap="round"/>
<path d="M868.0 81.8 L872.0 94.5 L887.7 108.0 L895.5 112.0 L896.4 126.0" fill="none" stroke="#0a0e12" stroke-width="3.4" stroke-linejoin="round" stroke-linecap="round"/>
<path d="M868.0 116.0 L880.0 119.0 L893.5 124.0" fill="none" stroke="#0a0e12" stroke-width="3.4" stroke-linejoin="round" stroke-linecap="round"/>
<path d="M889.6 70.0 L902.3 88.6 L899.4 96.4 L896.4 112.0" fill="none" stroke="#0a0e12" stroke-width="3.4" stroke-linejoin="round" stroke-linecap="round"/>
<path d="M907.0 58.3 L919.0 75.0 L924.8 84.7 L938.4 90.5 L946.2 80.8 L952.0 73.0 L946.2 67.0" fill="none" stroke="#0a0e12" stroke-width="3.4" stroke-linejoin="round" stroke-linecap="round"/>
<path d="M899.4 104.0 L917.0 108.0 L922.8 126.0" fill="none" stroke="#0a0e12" stroke-width="3.4" stroke-linejoin="round" stroke-linecap="round"/>
<path d="M938.4 90.5 L932.6 104.0 L924.8 122.0" fill="none" stroke="#0a0e12" stroke-width="3.4" stroke-linejoin="round" stroke-linecap="round"/>
<path d="M940.4 49.5 L944.3 69.0 L952.0 73.0" fill="none" stroke="#0a0e12" stroke-width="3.4" stroke-linejoin="round" stroke-linecap="round"/>
<path d="M946.2 80.8 L956.0 88.6 L961.9 84.7 L963.8 94.5 L961.0 126.0" fill="none" stroke="#0a0e12" stroke-width="3.4" stroke-linejoin="round" stroke-linecap="round"/>
<path d="M981.4 48.5 L971.6 78.8 L963.8 94.5" fill="none" stroke="#0a0e12" stroke-width="3.4" stroke-linejoin="round" stroke-linecap="round"/>
<path d="M994.0 49.5 L993.0 82.7 L985.3 100.3 L983.4 116.0 L963.8 124.0" fill="none" stroke="#0a0e12" stroke-width="3.4" stroke-linejoin="round" stroke-linecap="round"/>
<path d="M1022.0 63.2 L1004.8 84.7 L991.2 98.4 L985.3 100.3" fill="none" stroke="#0a0e12" stroke-width="3.4" stroke-linejoin="round" stroke-linecap="round"/>
<path d="M1004.8 84.7 L1014.6 96.4 L1020.5 100.3 L1034.0 108.0 L1044.0 114.0 L1061.5 126.0" fill="none" stroke="#0a0e12" stroke-width="3.4" stroke-linejoin="round" stroke-linecap="round"/>
<path d="M1038.0 72.0 L1030.0 92.5 L1020.5 100.3" fill="none" stroke="#0a0e12" stroke-width="3.4" stroke-linejoin="round" stroke-linecap="round"/>
<path d="M1020.5 100.3 L1008.8 110.0 L1004.8 126.0" fill="none" stroke="#0a0e12" stroke-width="3.4" stroke-linejoin="round" stroke-linecap="round"/>
<path d="M1020.5 100.3 L1022.4 126.0" fill="none" stroke="#0a0e12" stroke-width="3.4" stroke-linejoin="round" stroke-linecap="round"/>
<path d="M1059.5 90.5 L1051.7 100.3 L1038.0 110.0" fill="none" stroke="#0a0e12" stroke-width="3.4" stroke-linejoin="round" stroke-linecap="round"/>
<path d="M801.7 116.0 L821.0 124.0" fill="none" stroke="#0a0e12" stroke-width="3.4" stroke-linejoin="round" stroke-linecap="round"/>
<path d="M1061.5 126.0 L1055.0 138.0" fill="none" stroke="#0a0e12" stroke-width="3.4" stroke-linejoin="round" stroke-linecap="round"/>
<path d="M551.0 590.0 C536.3 591.4 548.2 601.7 548.0 604.0 C547.8 606.3 548.1 611.0 549.0 613.0 C549.9 615.0 555.8 622.0 557.0 624.0 C558.2 626.0 560.4 631.1 561.0 633.0 C561.6 634.9 561.9 641.1 563.0 643.0 C564.1 644.9 570.0 650.0 572.0 652.0 C574.0 654.0 580.8 661.1 583.5 663.0 C586.2 664.9 596.1 670.0 599.5 670.6 C602.9 671.2 614.0 670.6 617.0 669.5 C620.0 668.4 627.7 662.0 630.0 660.0 C632.3 658.0 638.0 652.0 640.0 650.0 C642.0 648.0 647.8 642.0 650.0 640.0 C652.2 638.0 659.4 631.6 662.0 630.0 C664.6 628.4 673.7 624.6 676.0 624.0 C678.3 623.4 683.4 624.3 685.0 624.0 C686.6 623.7 691.1 622.8 692.0 621.0 C692.9 619.2 693.7 609.1 694.0 606.0 C694.3 602.9 709.3 591.6 695.0 590.0 C680.7 588.4 565.7 588.6 551.0 590.0 Z" fill="#4290d8" stroke="#16222e" stroke-width="2.2"/>
<path d="M562.0 590.3 C549.5 591.5 559.1 600.3 558.9 602.2 C558.6 604.2 558.8 608.3 559.6 610.0 C560.4 611.6 565.8 617.5 566.9 619.1 C567.9 620.8 569.7 625.2 570.1 626.9 C570.6 628.5 570.4 634.1 571.3 635.8 C572.2 637.5 577.3 641.8 579.0 643.5 C580.8 645.3 586.4 651.7 588.7 653.3 C591.1 655.0 599.6 659.5 602.5 660.0 C605.4 660.5 615.1 659.6 617.7 658.5 C620.3 657.4 626.8 651.0 628.7 649.1 C630.6 647.2 635.2 641.4 636.7 639.5 C638.3 637.6 642.7 632.2 644.5 630.5 C646.2 628.8 651.8 623.6 654.0 622.4 C656.2 621.2 664.4 618.7 666.5 618.4 C668.7 618.1 673.7 619.2 675.2 619.0 C676.7 618.9 681.0 618.3 681.8 616.8 C682.6 615.3 683.0 606.5 683.2 603.9 C683.4 601.3 696.1 591.7 684.0 590.3 C671.9 588.9 574.5 589.1 562.0 590.3 Z" fill="#05080b"/>
<path d="M548.5 597.1 L561.5 596.2" stroke="#06090c" stroke-width="2.8"/>
<path d="M547.0 604.2 L559.8 602.1" stroke="#06090c" stroke-width="2.8"/>
<path d="M548.0 613.3 L560.5 609.7" stroke="#06090c" stroke-width="2.8"/>
<path d="M552.1 618.9 L564.2 614.2" stroke="#06090c" stroke-width="2.8"/>
<path d="M556.1 624.4 L567.8 618.7" stroke="#06090c" stroke-width="2.8"/>
<path d="M560.2 633.6 L571.0 626.3" stroke="#06090c" stroke-width="2.8"/>
<path d="M562.2 643.7 L572.1 635.2" stroke="#06090c" stroke-width="2.8"/>
<path d="M571.4 652.8 L579.7 642.8" stroke="#06090c" stroke-width="2.8"/>
<path d="M577.2 658.3 L584.5 647.6" stroke="#06090c" stroke-width="2.8"/>
<path d="M583.0 663.9 L589.2 652.5" stroke="#06090c" stroke-width="2.8"/>
<path d="M591.1 667.7 L596.0 655.7" stroke="#06090c" stroke-width="2.8"/>
<path d="M599.2 671.6 L602.8 659.1" stroke="#06090c" stroke-width="2.8"/>
<path d="M608.1 671.0 L610.3 658.2" stroke="#06090c" stroke-width="2.8"/>
<path d="M616.9 670.5 L617.8 657.5" stroke="#06090c" stroke-width="2.8"/>
<path d="M623.5 665.7 L623.3 652.8" stroke="#06090c" stroke-width="2.8"/>
<path d="M630.1 661.0 L628.6 648.1" stroke="#06090c" stroke-width="2.8"/>
<path d="M635.2 656.0 L632.6 643.2" stroke="#06090c" stroke-width="2.8"/>
<path d="M640.3 651.0 L636.4 638.5" stroke="#06090c" stroke-width="2.8"/>
<path d="M645.4 645.9 L640.2 634.0" stroke="#06090c" stroke-width="2.8"/>
<path d="M650.5 640.9 L644.0 629.6" stroke="#06090c" stroke-width="2.8"/>
<path d="M656.6 635.8 L648.6 625.6" stroke="#06090c" stroke-width="2.8"/>
<path d="M662.7 630.7 L653.3 621.7" stroke="#06090c" stroke-width="2.8"/>
<path d="M669.8 627.6 L659.4 619.8" stroke="#06090c" stroke-width="2.8"/>
<path d="M676.9 624.5 L665.7 617.9" stroke="#06090c" stroke-width="2.8"/>
<path d="M685.9 624.5 L674.3 618.6" stroke="#06090c" stroke-width="2.8"/>
<path d="M692.9 621.4 L680.9 616.4" stroke="#06090c" stroke-width="2.8"/>
<path d="M694.0 613.8 L681.5 610.0" stroke="#06090c" stroke-width="2.8"/>
<path d="M695.0 606.2 L682.2 603.7" stroke="#06090c" stroke-width="2.8"/>
<path d="M695.5 598.1 L682.5 597.0" stroke="#06090c" stroke-width="2.8"/>
<rect x="598.7" y="602.6" width="3.1" height="1.7" fill="#5e8296" opacity="0.32"/>
<rect x="627.3" y="617.6" width="1.6" height="2.8" fill="#5e8296" opacity="0.32"/>
<rect x="564.4" y="598.3" width="2.6" height="3.6" fill="#5e8296" opacity="0.32"/>
<rect x="571.7" y="607.6" width="3.1" height="3.9" fill="#5e8296" opacity="0.32"/>
<rect x="632.9" y="619.8" width="3.9" height="1.6" fill="#5e8296" opacity="0.32"/>
<rect x="670.9" y="612.3" width="1.9" height="1.8" fill="#5e8296" opacity="0.32"/>
<rect x="596.6" y="649.1" width="2.0" height="3.0" fill="#5e8296" opacity="0.2"/>
<rect x="641.3" y="618.1" width="2.9" height="1.7" fill="#5e8296" opacity="0.32"/>
<rect x="563.0" y="606.4" width="3.2" height="2.6" fill="#5e8296" opacity="0.32"/>
<rect x="597.4" y="633.0" width="2.6" height="2.2" fill="#5e8296" opacity="0.32"/>
<rect x="588.0" y="632.2" width="2.8" height="3.7" fill="#5e8296" opacity="0.32"/>
<rect x="653.5" y="612.2" width="4.0" height="1.8" fill="#5e8296" opacity="0.32"/>
<rect x="611.4" y="645.0" width="1.9" height="2.7" fill="#5e8296" opacity="0.2"/>
<rect x="673.2" y="614.0" width="3.2" height="3.0" fill="#5e8296" opacity="0.32"/>
<rect x="633.3" y="623.9" width="3.6" height="3.9" fill="#5e8296" opacity="0.32"/>
<rect x="619.0" y="638.5" width="1.7" height="3.3" fill="#5e8296" opacity="0.32"/>
<rect x="666.0" y="611.9" width="2.5" height="3.2" fill="#5e8296" opacity="0.32"/>
<rect x="577.7" y="600.2" width="1.6" height="3.4" fill="#5e8296" opacity="0.32"/>
<rect x="572.5" y="609.3" width="2.5" height="3.7" fill="#5e8296" opacity="0.32"/>
<rect x="592.6" y="621.1" width="2.4" height="3.7" fill="#5e8296" opacity="0.32"/>
<rect x="578.8" y="608.2" width="2.1" height="2.7" fill="#5e8296" opacity="0.32"/>
<rect x="634.5" y="610.4" width="1.5" height="2.5" fill="#5e8296" opacity="0.32"/>
<rect x="604.8" y="631.6" width="3.9" height="3.2" fill="#5e8296" opacity="0.32"/>
<rect x="624.6" y="635.2" width="3.2" height="1.6" fill="#5e8296" opacity="0.32"/>
<rect x="608.0" y="619.9" width="1.8" height="3.1" fill="#5e8296" opacity="0.32"/>
<rect x="563.4" y="596.7" width="2.0" height="1.9" fill="#5e8296" opacity="0.32"/>
<rect x="600.9" y="595.7" width="1.5" height="1.9" fill="#5e8296" opacity="0.32"/>
<rect x="568.7" y="617.5" width="1.6" height="3.7" fill="#5e8296" opacity="0.32"/>
<rect x="637.9" y="602.4" width="2.1" height="2.4" fill="#5e8296" opacity="0.32"/>
<rect x="604.2" y="600.6" width="3.6" height="4.0" fill="#5e8296" opacity="0.32"/>
<rect x="617.9" y="625.9" width="1.7" height="1.8" fill="#5e8296" opacity="0.32"/>
<rect x="601.3" y="610.5" width="3.6" height="1.9" fill="#5e8296" opacity="0.32"/>
<rect x="626.3" y="602.3" width="2.9" height="1.6" fill="#5e8296" opacity="0.32"/>
<rect x="590.3" y="617.7" width="1.9" height="3.4" fill="#5e8296" opacity="0.32"/>
<rect x="626.9" y="646.5" width="2.3" height="2.1" fill="#5e8296" opacity="0.2"/>
<rect x="585.6" y="628.2" width="2.4" height="1.6" fill="#5e8296" opacity="0.32"/>
<rect x="590.0" y="640.5" width="3.9" height="2.6" fill="#5e8296" opacity="0.2"/>
<rect x="584.8" y="607.9" width="2.0" height="2.0" fill="#5e8296" opacity="0.32"/>
<rect x="599.9" y="648.1" width="3.9" height="2.5" fill="#5e8296" opacity="0.2"/>
<rect x="609.2" y="658.3" width="3.3" height="1.9" fill="#5e8296" opacity="0.2"/>
<rect x="572.2" y="602.6" width="3.8" height="3.5" fill="#5e8296" opacity="0.32"/>
<rect x="602.3" y="630.4" width="1.8" height="1.5" fill="#5e8296" opacity="0.32"/>
<rect x="613.6" y="653.0" width="3.6" height="2.0" fill="#5e8296" opacity="0.2"/>
<rect x="589.0" y="612.5" width="2.1" height="3.0" fill="#5e8296" opacity="0.32"/>
<rect x="590.0" y="621.3" width="1.8" height="3.8" fill="#5e8296" opacity="0.32"/>
<rect x="602.8" y="624.1" width="3.0" height="3.8" fill="#5e8296" opacity="0.32"/>
<rect x="611.8" y="656.2" width="2.8" height="2.8" fill="#5e8296" opacity="0.2"/>
<rect x="625.7" y="593.3" width="2.6" height="2.0" fill="#5e8296" opacity="0.32"/>
<rect x="578.3" y="625.1" width="3.3" height="2.9" fill="#5e8296" opacity="0.32"/>
<rect x="599.0" y="628.3" width="2.9" height="3.5" fill="#5e8296" opacity="0.32"/>
<rect x="588.5" y="611.4" width="3.4" height="2.8" fill="#5e8296" opacity="0.32"/>
<rect x="630.8" y="645.2" width="3.8" height="2.6" fill="#5e8296" opacity="0.2"/>
<rect x="637.7" y="627.4" width="2.8" height="3.2" fill="#5e8296" opacity="0.32"/>
<rect x="616.1" y="629.3" width="2.7" height="3.9" fill="#5e8296" opacity="0.32"/>
<rect x="682.2" y="610.2" width="2.9" height="3.9" fill="#5e8296" opacity="0.32"/>
<rect x="668.4" y="601.6" width="1.8" height="2.6" fill="#5e8296" opacity="0.32"/>
<rect x="564.8" y="608.8" width="1.7" height="3.2" fill="#5e8296" opacity="0.32"/>
<rect x="644.1" y="602.0" width="3.7" height="3.9" fill="#5e8296" opacity="0.32"/>
<rect x="608.8" y="626.1" width="4.0" height="3.6" fill="#5e8296" opacity="0.32"/>
<rect x="576.8" y="622.2" width="2.8" height="2.3" fill="#5e8296" opacity="0.32"/>
<rect x="581.4" y="614.3" width="3.3" height="1.5" fill="#5e8296" opacity="0.32"/>
<rect x="629.8" y="622.8" width="1.5" height="2.3" fill="#5e8296" opacity="0.32"/>
<rect x="639.2" y="627.9" width="1.7" height="4.0" fill="#5e8296" opacity="0.32"/>
<rect x="569.1" y="610.6" width="1.6" height="3.4" fill="#5e8296" opacity="0.32"/>
<rect x="591.5" y="601.1" width="2.6" height="3.8" fill="#5e8296" opacity="0.32"/>
<rect x="665.6" y="610.1" width="1.9" height="3.8" fill="#5e8296" opacity="0.32"/>
<rect x="632.0" y="641.0" width="1.7" height="1.6" fill="#5e8296" opacity="0.2"/>
<rect x="647.9" y="621.8" width="1.7" height="3.8" fill="#5e8296" opacity="0.32"/>
<rect x="616.3" y="615.7" width="2.9" height="3.8" fill="#5e8296" opacity="0.32"/>
<rect x="591.2" y="601.0" width="2.8" height="2.1" fill="#5e8296" opacity="0.32"/>
<text x="1093.9" y="227" font-family="Liberation Sans" font-size="8.8" font-weight="700" font-style="normal" letter-spacing="0.25" fill="#6e6e6e" stroke="rgba(255,255,255,0.3)" stroke-width="1.4" paint-order="stroke">MURMANSK</text>
<text x="1103.2" y="237.6" font-family="Liberation Sans" font-size="8.8" font-weight="700" font-style="normal" letter-spacing="0.0" fill="#6e6e6e" stroke="rgba(255,255,255,0.3)" stroke-width="1.4" paint-order="stroke">OBLAST</text>
<text x="1100" y="319.6" font-family="Liberation Sans" font-size="12" font-weight="400" font-style="italic" letter-spacing="0" fill="#3a74a6" stroke="none" stroke-width="1.4" paint-order="stroke">White Sea</text>
<text x="1083.7" y="434" font-family="Liberation Sans" font-size="8.8" font-weight="700" font-style="normal" letter-spacing="0.0" fill="#6e6e6e" stroke="rgba(255,255,255,0.3)" stroke-width="1.4" paint-order="stroke">KARELIA</text>
<text x="1227" y="431.9" font-family="Liberation Sans" font-size="8.8" font-weight="700" font-style="normal" letter-spacing="0.0" fill="#6e6e6e" stroke="rgba(255,255,255,0.3)" stroke-width="1.4" paint-order="stroke">ARKHANGELSK</text>
<text x="1243.4" y="442.4" font-family="Liberation Sans" font-size="8.8" font-weight="700" font-style="normal" letter-spacing="0.0" fill="#6e6e6e" stroke="rgba(255,255,255,0.3)" stroke-width="1.4" paint-order="stroke">OBLAST</text>
<text x="1528.7" y="230.9" font-family="Liberation Sans" font-size="8.8" font-weight="700" font-style="normal" letter-spacing="0" fill="#6e6e6e" stroke="rgba(255,255,255,0.3)" stroke-width="1.4" paint-order="stroke">N</text>
<text x="1514.6" y="240.7" font-family="Liberation Sans" font-size="8.8" font-weight="700" font-style="normal" letter-spacing="0.1" fill="#6e6e6e" stroke="rgba(255,255,255,0.3)" stroke-width="1.4" paint-order="stroke">AUTO</text>
<text x="1531.5" y="252" font-family="Liberation Sans" font-size="8.8" font-weight="700" font-style="normal" letter-spacing="0" fill="#6e6e6e" stroke="rgba(255,255,255,0.3)" stroke-width="1.4" paint-order="stroke">O</text>
<text x="1519.6" y="415.5" font-family="Liberation Sans" font-size="8.8" font-weight="700" font-style="normal" letter-spacing="0.1" fill="#6e6e6e" stroke="rgba(255,255,255,0.3)" stroke-width="1.4" paint-order="stroke">KOM</text>
<text x="1509.4" y="426.3" font-family="Liberation Sans" font-size="8.8" font-weight="700" font-style="normal" letter-spacing="0.1" fill="#6e6e6e" stroke="rgba(255,255,255,0.3)" stroke-width="1.4" paint-order="stroke">REPUB</text>
<text x="1068" y="587.2" font-family="Liberation Sans" font-size="8.8" font-weight="700" font-style="normal" letter-spacing="0.15" fill="#6e6e6e" stroke="rgba(255,255,255,0.3)" stroke-width="1.4" paint-order="stroke">LENINGRAD</text>
<text x="1076.5" y="597.6" font-family="Liberation Sans" font-size="8.8" font-weight="700" font-style="normal" letter-spacing="0.05" fill="#6e6e6e" stroke="rgba(255,255,255,0.3)" stroke-width="1.4" paint-order="stroke">OBLAST</text>
<text x="1068.2" y="642.8" font-family="Liberation Sans" font-size="8.8" font-weight="700" font-style="normal" letter-spacing="0.0" fill="#6e6e6e" stroke="rgba(255,255,255,0.3)" stroke-width="1.4" paint-order="stroke">NOVGOROD</text>
<text x="1076" y="653" font-family="Liberation Sans" font-size="8.8" font-weight="700" font-style="normal" letter-spacing="0.05" fill="#6e6e6e" stroke="rgba(255,255,255,0.3)" stroke-width="1.4" paint-order="stroke">OBLAST</text>
<text x="1224.8" y="597.6" font-family="Liberation Sans" font-size="8.8" font-weight="700" font-style="normal" letter-spacing="0.0" fill="#6e6e6e" stroke="rgba(255,255,255,0.3)" stroke-width="1.4" paint-order="stroke">VOLOGDA</text>
<text x="1229" y="607.8" font-family="Liberation Sans" font-size="8.8" font-weight="700" font-style="normal" letter-spacing="0.0" fill="#6e6e6e" stroke="rgba(255,255,255,0.3)" stroke-width="1.4" paint-order="stroke">OBLAST</text>
<text x="1275.8" y="640.7" font-family="Liberation Sans" font-size="8.8" font-weight="700" font-style="normal" letter-spacing="0.1" fill="#6e6e6e" stroke="rgba(255,255,255,0.3)" stroke-width="1.4" paint-order="stroke">KOSTROMA</text>
<text x="1283" y="651" font-family="Liberation Sans" font-size="8.8" font-weight="700" font-style="normal" letter-spacing="0.0" fill="#6e6e6e" stroke="rgba(255,255,255,0.3)" stroke-width="1.4" paint-order="stroke">OBLAST</text>
<text x="1093" y="698" font-family="Liberation Sans" font-size="8.8" font-weight="700" font-style="normal" letter-spacing="0.07" fill="#6e6e6e" stroke="rgba(255,255,255,0.3)" stroke-width="1.4" paint-order="stroke">TVER OBLAST</text>
<text x="1239" y="689.6" font-family="Liberation Sans" font-size="8.8" font-weight="700" font-style="normal" letter-spacing="0.35" fill="#6e6e6e" stroke="rgba(255,255,255,0.3)" stroke-width="1.4" paint-order="stroke">IVANOVO</text>
<text x="1241.8" y="699.8" font-family="Liberation Sans" font-size="8.8" font-weight="700" font-style="normal" letter-spacing="0.0" fill="#6e6e6e" stroke="rgba(255,255,255,0.3)" stroke-width="1.4" paint-order="stroke">OBLAST</text>
<text x="860.4" y="696.4" font-family="Liberation Sans" font-size="8" font-weight="700" font-style="normal" letter-spacing="0.55" fill="#6e6e6e" stroke="rgba(255,255,255,0.3)" stroke-width="1.4" paint-order="stroke">KURZEME</text>
<text x="865" y="706.6" font-family="Liberation Sans" font-size="8" font-weight="700" font-style="normal" letter-spacing="0.4" fill="#6e6e6e" stroke="rgba(255,255,255,0.3)" stroke-width="1.4" paint-order="stroke">REGION</text>
<text x="966.8" y="710" font-family="Liberation Sans" font-size="8" font-weight="700" font-style="normal" letter-spacing="0.55" fill="#6e6e6e" stroke="rgba(255,255,255,0.3)" stroke-width="1.4" paint-order="stroke">LATGALE</text>
<text x="388.5" y="693" font-family="Liberation Sans" font-size="8" font-weight="700" font-style="normal" letter-spacing="0.5" fill="#6e6e6e" stroke="rgba(255,255,255,0.3)" stroke-width="1.4" paint-order="stroke">ND</text>
<text x="927.6" y="641.9" font-family="Liberation Sans" font-size="12.8" font-weight="700" font-style="normal" letter-spacing="0.2" fill="#333" stroke="rgba(255,255,255,0.35)" stroke-width="1.4" paint-order="stroke">Estonia</text>
<text x="912.3" y="703.7" font-family="Liberation Sans" font-size="12.8" font-weight="700" font-style="normal" letter-spacing="0.1" fill="#333" stroke="rgba(255,255,255,0.35)" stroke-width="1.4" paint-order="stroke">Latvia</text>
</svg></div>
<div id="layers" class="abs" style="left:400px;top:13px;width:294px;height:124px;border-radius:10px;background:#fff;box-shadow:0 6px 24px rgba(0,0,0,.42);overflow:hidden">
  <div class="abs" style="left:0;top:0;width:294px;height:45px;background:#f4f4f4;border-bottom:1px solid #e6e6e6"></div>
  <svg class="abs" style="left:15px;top:14px" width="16" height="18" viewBox="0 0 16 18"><path d="M10.5 3 L4.5 9 L10.5 15" fill="none" stroke="#222" stroke-width="1.5" stroke-linecap="round" stroke-linejoin="round"/></svg>
  <svg class="abs" style="left:43px;top:14px" width="18" height="18" viewBox="0 0 18 18" fill="none" stroke="#222" stroke-width="1.5" stroke-linejoin="round" stroke-linecap="round"><path d="M9 2 L16 5.8 L9 9.6 L2 5.8 Z"/><path d="M2 9.4 L9 13.2 L16 9.4"/><path d="M2 12.8 L9 16.6 L16 12.8"/></svg>
  <div class="t" style="left:66px;top:14px;font-size:15.5px;font-weight:400;letter-spacing:-0.35px;color:#111;-webkit-text-stroke:0.5px #111">Layers</div>
  <svg class="abs" style="left:13px;top:59px" width="17" height="17" viewBox="0 0 17 17" fill="none" stroke="#444" stroke-width="1.1"><path d="M3 7.5 L8 3 L14 5.5 L9.5 13.5 Z"/><circle cx="3" cy="7.5" r="1.6" fill="#fff"/><circle cx="8" cy="3" r="1.6" fill="#fff"/><circle cx="14" cy="5.5" r="1.6" fill="#fff"/><circle cx="9.5" cy="13.5" r="1.6" fill="#fff"/></svg>
  <div class="t" style="left:39px;top:61px;font-size:13.1px;color:#222">norway_administrative_b...</div>
  <div class="abs" style="left:23px;top:83px;width:187px;height:30px;border:1px solid #dedede;border-radius:3px;background:#fafafa"></div>
  <div class="abs" style="left:32px;top:91.5px;width:13px;height:13px;border-radius:50%;background:#0a56b8"></div>
  <div class="t" style="left:55px;top:93px;font-size:10.3px;color:#222">Basic color</div>
  <svg class="abs" style="left:216px;top:74.5px" width="60" height="18" viewBox="0 0 60 18" fill="none" stroke="#1f3f6e" stroke-width="1.4" stroke-linecap="round">
    <circle cx="7" cy="7.5" r="5.2"/><path d="M4.6 7.5 L9.4 7.5 M7 5.1 L7 9.9 M10.8 11.3 L13.8 14.3"/>
    <path d="M21.3 8 C24.5 1.5, 33.5 1.5, 36.7 8 C33.5 14.5, 24.5 14.5, 21.3 8 Z" stroke-width="1.5"/><circle cx="29" cy="8" r="2.8" stroke-width="1.6"/>
    <rect x="49.2" y="3" width="1.6" height="1.6" fill="#2a3b55" stroke="none"/><rect x="49.2" y="7.1" width="1.6" height="1.6" fill="#2a3b55" stroke="none"/><rect x="49.2" y="11.2" width="1.6" height="1.6" fill="#2a3b55" stroke="none"/>
  </svg>
</div>

<div class="abs" style="left:1340px;top:22px;width:47px;height:43px;border-radius:8px;background:#fff"></div>
<svg class="abs" style="left:1352px;top:32px" width="24" height="24" viewBox="0 0 24 24">
  <defs><linearGradient id="aig" x1="0" y1="0" x2="0" y2="1"><stop offset="0" stop-color="#5a0fa8"/><stop offset="1" stop-color="#d43cc8"/></linearGradient>
  <mask id="aim"><rect x="0" y="0" width="24" height="24" fill="#fff"/><circle cx="18.3" cy="4.9" r="5.6" fill="#000"/></mask></defs>
  <rect x="0.7" y="0.8" width="21.6" height="21.4" rx="4" fill="url(#aig)" mask="url(#aim)"/>
  <path d="M18.3 0.6 Q18.9 4.3 22.6 4.9 Q18.9 5.5 18.3 9.2 Q17.7 5.5 14 4.9 Q17.7 4.3 18.3 0.6 Z" fill="#5a16a0"/>
  <path d="M5 17.6 L9.4 5.8 L13.8 17.6 M6.5 13.6 L12.3 13.6" fill="none" stroke="#fff" stroke-width="1.6" stroke-linejoin="round"/>
  <rect x="16.3" y="11.6" width="1.9" height="6" fill="#fff"/>
</svg>
<div class="abs" style="left:1392px;top:22px;width:98px;height:43px;border-radius:10px;background:#1a4a92"></div>
<svg class="abs" style="left:1403px;top:36px" width="19" height="15" viewBox="0 0 19 15" fill="none" stroke="#fff" stroke-width="1.1"><rect x="1.9" y="3.9" width="15.6" height="9.6" rx="1.2"/><path d="M6.5 3.9 L6.5 1.2 L12.7 1.2 L12.7 3.9 M1.9 7.6 L17.5 7.6 M5.2 6.3 L5.2 8.9 M14.2 6.3 L14.2 8.9"/></svg>
<div class="t" style="left:1432px;top:38px;font-size:13.3px;color:#fff">Toolbox</div>

<div class="abs" style="left:1497px;top:19px;width:30px;height:93px;border-radius:4px;background:#fff;box-shadow:0 0 0 1px rgba(0,0,0,.06)"></div>
<div class="abs" style="left:1497px;top:49px;width:30px;height:1px;background:#e2e2e2"></div>
<div class="abs" style="left:1497px;top:80px;width:30px;height:1px;background:#e2e2e2"></div>
<svg class="abs" style="left:1497px;top:19px" width="30" height="93" viewBox="0 0 30 93">
  <path d="M15 9.5 L15 20.5 M9.5 15 L20.5 15" stroke="#333" stroke-width="1.8"/>
  <path d="M9.5 47 L20.5 47" stroke="#333" stroke-width="1.8"/>
  <path d="M15 69 L19 79 L11 79 Z" fill="#333"/>
  <path d="M15 88 L19 79 L11 79 Z" fill="#9aa5b5"/>
</svg>
<div class="abs" style="left:1497px;top:122px;width:30px;height:31px;border-radius:4px;background:#fff"></div>
<svg class="abs" style="left:1497px;top:122px" width="30" height="31" viewBox="0 0 30 31"><path d="M21.5 9 L8 14.5 L14.2 16.8 L16.5 23 Z" fill="none" stroke="#333" stroke-width="1.5" stroke-linejoin="round"/></svg>

<div class="t" style="left:1460px;top:628.8px;font-size:11.1px;color:#000">Attribution</div>
<div class="abs" style="left:1515px;top:624.5px;width:16px;height:16px;border-radius:50%;background:#000"></div>
<div class="t" style="left:1520.5px;top:626.5px;font-size:12.5px;font-weight:700;font-style:italic;color:#fff;font-family:'Liberation Serif'">i</div>

<div class="abs" style="left:1346px;top:650px;width:187px;height:37.5px;border-radius:19px;background:#25d366"></div>
<svg class="abs" style="left:1368px;top:656px" width="26" height="26" viewBox="0 0 26 26">
  <path d="M13 2.2 A10.6 10.6 0 1 1 7.3 21.9 L2.3 23.5 L4 18.8 A10.6 10.6 0 0 1 13 2.2 Z" fill="#fff"/>
  <path d="M13 4 A8.9 8.9 0 1 1 8 20.3 L4.8 21.2 L5.8 18.2 A8.9 8.9 0 0 1 13 4 Z" fill="#25b858"/>
  <path d="M9.3 8.3 Q10.2 7.6 10.9 8.6 L11.8 10.6 Q12 11.2 11.3 11.9 Q10.9 12.3 11.3 12.9 Q12.6 15 14.7 16 Q15.3 16.3 15.7 15.8 L16.4 15 Q16.9 14.5 17.5 14.8 L19 15.6 Q19.6 16 19.2 16.9 Q18.4 18.6 16.5 18.5 Q13.2 18.2 10.4 15 Q8 12.2 8.4 10.1 Q8.6 9 9.3 8.3 Z" fill="#fff"/>
</svg>
<div class="t" style="left:1401px;top:663.7px;font-size:11.6px;font-weight:700;letter-spacing:-0.15px;color:#fff">How can I help you?</div>

<div class="abs" style="left:1318px;top:697px;width:218px;height:14px;background:rgba(255,255,255,.5)"></div>
<div class="t" style="left:1322px;top:699.5px;font-size:11.3px;color:#333">© MapTiler © OpenStreetMap contributors</div>
<div id="sidebar" class="abs">
  <svg class="abs" style="left:0;top:0" width="78" height="56" viewBox="0 0 78 56">
    <text x="12" y="28.2" font-family="Liberation Sans" font-weight="700" font-size="22" fill="#0f3f86" stroke="#0f3f86" stroke-width="0.5" transform="translate(12.2 0) scale(0.655 1) translate(-12.2 0)">MAP</text>
    <text x="45.8" y="28.2" font-family="Liberation Sans" font-weight="700" font-size="22" fill="#ffc400" stroke="#ffc400" stroke-width="0.5" transform="translate(45.8 0) scale(0.555 1) translate(-45.8 0)">OG</text>
    <path d="M50 25 C48.6 23.3 48.1 22.5 48.1 21.6 A1.9 1.9 0 0 1 51.9 21.6 C51.9 22.5 51.4 23.3 50 25 Z" fill="#0f3f86"/>
    <circle cx="50" cy="21.6" r="0.6" fill="#ffc400"/>
    <rect x="10.5" y="28.9" width="56" height="0.9" fill="#e9d28a"/>
  </svg>
  <div class="hr"></div>
  <svg class="abs" style="left:0;top:60px" width="78" height="300" viewBox="0 60 78 300" fill="none" stroke="#6e7686" stroke-width="1.55" stroke-linejoin="round" stroke-linecap="round">
    <!-- map -->
    <path d="M28.5 80.5 L34.5 78.5 L41.5 81 L48 79 L48 95 L41.5 97 L34.5 94.5 L28.5 96.5 Z M34.5 78.5 L34.5 94.5 M41.5 81 L41.5 97"/>
    <!-- pin -->
    <path d="M38 130 C33 124 31.5 121.5 31.5 119.5 A6.5 6.5 0 0 1 44.5 119.5 C44.5 121.5 43 124 38 130 Z"/>
    <circle cx="38" cy="119.7" r="2.2"/>
    <path d="M32 131.5 L44 131.5"/>
    <!-- file upload -->
    <path d="M32 151 L41 151 L45 155 L45 166.5 L32 166.5 Z M41 151 L41 155 L45 155"/>
    <path d="M38.5 164 L38.5 157.5 M36 160 L38.5 157.5 L41 160"/>
    <!-- pin photo -->
    <path d="M36 222 L32 222 Q29.5 222 29.5 224.5 L29.5 236 Q29.5 238.5 32 238.5 L45 238.5 Q47.5 238.5 47.5 236 L47.5 231"/>
    <path d="M36 222 L35 230 L29.5 233.5 M35 230 L40 235 L38 238.5 M40 235 L47.5 233"/>
    <path d="M43 230 C40 227 39 225.5 39 224.5 A4 4 0 0 1 47 224.5 C47 225.5 46 227 43 230 Z"/>
    <circle cx="43" cy="224.6" r="0.9"/>
    <!-- gear eye -->
    <path d="M36.2 257.3 L39.8 257.3 L40.5 259.5 L42.6 258.4 L45.2 261 L44.1 263.1 L46.3 263.8 L46.3 267.4 L44.1 268.1 L45.2 270.2 L42.6 272.8 L40.5 271.7 L39.8 273.9 L36.2 273.9 L35.5 271.7 L33.4 272.8 L30.8 270.2 L31.9 268.1 L29.7 267.4 L29.7 263.8 L31.9 263.1 L30.8 261 L33.4 258.4 L35.5 259.5 Z"/>
    <path d="M34.3 265.6 Q38 262.3 41.7 265.6 Q38 268.9 34.3 265.6 Z" stroke-width="1.3"/>
    <circle cx="38" cy="265.6" r="0.8" stroke-width="1"/>
    <!-- list edit -->
    <path d="M37 308 L31 308 Q30 308 30 307 L30 293.5 Q30 292.5 31 292.5 L46 292.5 Q47 292.5 47 293.5 L47 300"/>
    <path d="M33.5 296.5 L33.6 296.5 M33.5 300 L33.6 300 M33.5 303.5 L33.6 303.5 M36.5 296.5 L43.5 296.5 M36.5 300 L42 300 M36.5 303.5 L39.5 303.5"/>
    <path d="M39.5 308.5 Q40 304 45 304 L45 302.5 L47.5 305 L45 307.5 L45 306 Q42 306 39.5 308.5 Z" stroke-width="1.2"/>
    <!-- envelope pin -->
    <path d="M34 334.5 L30 337 Q29.5 337.5 29.5 338.3 L29.5 344.5 Q29.5 346 31 346 L46 346 Q47.5 346 47.5 344.5 L47.5 338.3 Q47.5 337.5 47 337 L43 334.5"/>
    <path d="M29.8 338 L38.5 343 M47.2 338 L40 342.3 M35 346 L41 340.5"/>
    <path d="M38.5 339.5 C35.5 336.5 34 334.5 34 332.3 A4.5 4.5 0 0 1 43 332.3 C43 334.5 41.5 336.5 38.5 339.5 Z"/>
    <circle cx="38.5" cy="332.3" r="1" />
  </svg>
  <div class="abs" style="left:15px;top:178px;width:47px;height:33px;border-radius:6px;background:#e0e5ee"></div>
  <svg class="abs" style="left:26px;top:182px" width="24" height="24" viewBox="0 0 24 24">
    <g fill="#656d80"><circle cx="12" cy="12" r="8"/><circle cx="20.02" cy="14.15" r="1.35"/><circle cx="17.87" cy="17.87" r="1.35"/><circle cx="14.15" cy="20.02" r="1.35"/><circle cx="9.85" cy="20.02" r="1.35"/><circle cx="6.13" cy="17.87" r="1.35"/><circle cx="3.98" cy="14.15" r="1.35"/><circle cx="3.98" cy="9.85" r="1.35"/><circle cx="6.13" cy="6.13" r="1.35"/><circle cx="9.85" cy="3.98" r="1.35"/><circle cx="14.15" cy="3.98" r="1.35"/><circle cx="17.87" cy="6.13" r="1.35"/><circle cx="20.02" cy="9.85" r="1.35"/></g>
    <circle cx="12" cy="12" r="4.7" fill="#e0e5ee"/>
    <path d="M12 12 L7 12 M12 12 L14.6 7.6 M12 12 L14.6 16.4" stroke="#656d80" stroke-width="2.2"/>
  </svg>
  <!-- bell -->
  <svg class="abs" style="left:26px;top:606px" width="22" height="24" viewBox="0 0 22 24" fill="none" stroke="#222" stroke-width="1.4" stroke-linejoin="round">
    <path d="M4 19.5 Q5.5 18 5.5 14 L5.5 11.5 Q5.5 6.5 10 6.2 Q14.5 6.5 14.5 11.5 L14.5 14 Q14.5 18 16.2 19.5 Z"/>
    <path d="M8.5 20 Q10 22 11.5 20"/>
  </svg>
  <div class="abs" style="left:41.7px;top:608px;width:4px;height:4px;border-radius:50%;background:#e00000"></div>
  <div class="abs" style="left:23px;top:654px;width:25px;height:25px;border-radius:50%;background:#1a4a92;box-shadow:0 2px 6px rgba(0,0,0,.35)"></div>
  <div class="t" style="left:30px;top:659px;font-size:15.5px;color:#fff">A</div>
</div>
<div class="abs" style="left:78px;top:40px;width:310px;height:250px;box-shadow:3px 0 20px rgba(0,0,0,.42)"></div>
<div id="panel" class="abs">
  <div class="abs" style="left:0;top:12px;width:12px;height:29px;border-radius:0 5px 5px 0;background:#eef0f4"></div>
  <svg class="abs" style="left:0;top:0" width="60" height="50" viewBox="78 0 60 50" fill="none" stroke-linecap="round" stroke-linejoin="round">
    <path d="M81.5 23 L85.8 27 L81.5 31" stroke="#5a7ea8" stroke-width="1.3"/>
    <path d="M91 20.2 A4 4 0 1 1 91 27.8" stroke="#2f3fa8" stroke-width="2"/>
    <path d="M105.3 26 L105.3 23.5 Q105.3 21 102.5 21 L99.8 21 M101.5 19.2 L99.7 21 L101.5 22.8" stroke="#2f3fa8" stroke-width="1.9"/>
    <rect x="97.6" y="28.6" width="8.2" height="8.4" rx="2" stroke="#2f3fa8" stroke-width="2"/>
    <path d="M90.5 34.4 L94.5 34.4 M92.6 32.4 L94.6 34.4 L92.6 36.4" stroke="#2f3fa8" stroke-width="1.9"/>
  </svg>
  <div class="t" style="left:47.8px;top:20px;font-size:18.3px;letter-spacing:-0.7px;color:#13498f;-webkit-text-stroke:0.35px #13498f">CONVERTOR TOOL</div>
  <svg class="abs" style="left:270px;top:19px" width="16" height="16" viewBox="0 0 16 16"><path d="M1.8 1.8 L14.2 14.2 M14.2 1.8 L1.8 14.2" stroke="#000" stroke-width="1.9"/></svg>
  <div class="abs" style="left:0;top:56px;width:298px;height:38px;background:#d0dbe8"></div>
  <div class="t" style="left:16px;top:69px;font-size:13.1px;color:#1f4e8f">Watch video tutorial for Convertor Tool</div>
  <svg class="abs" style="left:262px;top:60px" width="24" height="26" viewBox="342 60 24 26">
    <rect x="342.2" y="63.7" width="19.6" height="14.6" rx="3.5" fill="#d80000"/>
    <path d="M349.6 68 L349.6 74 Q349.6 75.3 350.8 74.6 L355.6 71.7 Q356.6 71 355.6 70.3 L350.8 67.4 Q349.6 66.7 349.6 68 Z" fill="none" stroke="#d0dbe8" stroke-width="1.4"/>
    <path d="M342.8 81.4 L345.4 81.4 M352.4 81.4 L361.2 81.4" stroke="#d80000" stroke-width="1.6" stroke-linecap="round"/>
    <circle cx="348.7" cy="81.4" r="1.6" fill="#d80000"/>
  </svg>
  <div class="abs" style="left:9.8px;top:110.8px;width:22.6px;height:22.6px;border-radius:50%;background:#1a4e96"></div>
  <div class="t" style="left:16.7px;top:115.3px;font-size:16px;color:#fff">2</div>
  <div class="t" style="left:40px;top:115px;font-size:14.7px;color:#222">Select Conversion Format</div>
  <div class="t" style="left:11px;top:162px;font-size:14.5px;color:#222">Layer Name :</div>
  <div class="abs" style="left:0;top:0;width:298px;height:711px;overflow:hidden">
    <div class="abs" style="left:11px;top:186px;width:320px;height:52px;border:1px solid #e3e3e3;border-radius:6px;background:#f5f5f5"></div>
    <div class="abs" style="left:11px;top:305px;width:320px;height:42px;border:1px solid #e3e3e3;border-radius:6px;background:#f5f5f5"></div>
    <div class="abs" style="left:11px;top:427px;width:300px;height:38px;border-radius:5px;background:#1a4a92"></div>
  </div>
  <div class="t" style="left:17.5px;top:203px;font-size:15px;font-weight:400;letter-spacing:0.17px;color:#111;-webkit-text-stroke:0.4px #111">norway_administrativ...</div>
  <div class="t" style="left:11px;top:280px;font-size:15px;color:#222">Select Export format</div>
  <div class="t" style="left:21px;top:318.2px;font-size:15px;color:#111">KMZ</div>
  <svg class="abs" style="left:57px;top:322.7px" width="10" height="6" viewBox="0 0 10 6"><path d="M0.5 0.5 L9.5 0.5 L5 5.5 Z" fill="#777"/></svg>
  <div class="t" style="left:118px;top:438px;font-size:14.5px;color:#fff">Convert File</div>
  <div class="abs" style="left:14px;top:382px;width:87px;height:34px;background:#1a4a92"></div>
  <div class="t" style="left:20px;top:392px;font-size:14px;color:#fff">Select CRS</div>
  <div class="t" style="left:110px;top:393px;font-size:14.5px;font-weight:700;color:#333">: 4326</div>
</div>
<div id="overlay" class="abs"></div>
<div class="abs" style="left:88px;top:378px;width:95px;height:42px;border:4px solid #ee1c25;z-index:150"></div>
<div id="modal" class="abs">
  <div class="abs" style="left:0;top:0;width:561px;height:56px;background:#fff;box-shadow:0 2px 6px rgba(0,0,0,.32);z-index:2"></div>
  <div class="t" style="left:19px;top:21.8px;font-size:17.8px;font-weight:400;color:#111;letter-spacing:0.62px;-webkit-text-stroke:0.55px #111;z-index:3">Coordinate Reference System</div>
  <div class="abs" style="left:545px;top:56px;width:16px;height:411px;background:#fafafa"></div>
  <svg class="abs" style="left:545px;top:56px" width="16" height="411" viewBox="0 0 16 411">
    <path d="M2.5 14 L8 6 L13.5 14 Z" fill="#8e8e8e"/>
    <rect x="3" y="20" width="10" height="63" rx="5" fill="#8e8e8e"/>
    <path d="M2.5 402 L8 409.5 L13.5 402 Z" fill="#8e8e8e"/>
  </svg>
  <div class="abs" style="left:17px;top:73px;width:510px;height:39px;background:#fff;box-shadow:0 1px 3px rgba(0,0,0,.28),0 1px 1px rgba(0,0,0,.1);border-radius:2px"></div>
  <svg class="abs" style="left:32px;top:83px" width="20" height="20" viewBox="0 0 20 20"><circle cx="8" cy="8" r="5.3" fill="none" stroke="#666" stroke-width="2"/><path d="M11.8 11.8 L16.5 16.5" stroke="#666" stroke-width="2.2" stroke-linecap="round"/></svg>
  <div class="t" style="left:69px;top:85.7px;font-size:14.5px;color:#8a8a8a">Type EPSG code to filter</div>
  <div class="abs" style="left:9.5px;top:150px;width:525.5px;height:46px;background:#f3f4f8;border-bottom:1px solid #e0e0e0"></div>
  <div class="t" style="left:24px;top:167.4px;font-size:12.5px;font-weight:700;letter-spacing:-0.2px;color:#222">EPSG</div>
  <div class="t" style="left:189px;top:167.4px;font-size:12.5px;font-weight:700;letter-spacing:-0.2px;color:#222">EPSG Code</div>
  <div class="t" style="left:354px;top:167.4px;font-size:12.5px;font-weight:700;letter-spacing:-0.2px;color:#222">Text</div>
  <div class="t" style="left:24px;top:264.2px;font-size:15px;letter-spacing:-1px;color:#222">EPSG</div>
  <div class="t" style="left:189px;top:264.2px;font-size:15px;color:#222">2019</div>
  <div class="abs" style="left:355px;top:204.2px;font-size:14.6px;line-height:22.1px;color:#222;white-space:nowrap">+proj=tmerc +lat_0=0<br>+lon_0=-79.5<br>+k=0.9999<br>+x_0=304800 +y_0=0<br>+ellps=clrk66<br>+units=m +no_defs</div>
  <div class="abs" style="left:17px;top:346px;width:510px;height:1px;background:#e4e4e4"></div>
  <div class="t" style="left:24px;top:414.9px;font-size:15px;letter-spacing:-1px;color:#222">EPSG</div>
  <div class="t" style="left:189px;top:414.9px;font-size:15px;color:#222">2020</div>
  <div class="abs" style="left:355px;top:354.1px;font-size:14.6px;line-height:22.1px;color:#222;white-space:nowrap">+proj=tmerc +lat_0=0<br>+lon_0=-82.5<br>+k=0.9999<br>+x_0=304800 +y_0=0<br>+ellps=clrk66<br>+units=m +no_defs</div>
</div>
</body></html>
